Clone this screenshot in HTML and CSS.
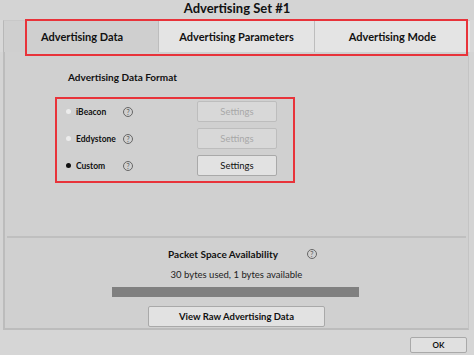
FILE: index.html
```html
<!DOCTYPE html>
<html lang="en">
<head>
    <meta charset="UTF-8">
    <title>Advertising Set #1</title>
    <link rel="stylesheet" href="styles.css">
</head>
<body>
    <div class="window">
        <div class="title">Advertising Set #1</div>
        <div class="tabs">
            <div class="tab active">Advertising Data</div>
            <div class="tab">Advertising Parameters</div>
            <div class="tab">Advertising Mode</div>
            <div class="mark mark-tabs"></div>
        </div>
        <div class="panel">
            <div class="section format">
                <div class="section-title">Advertising Data Format</div>
                <div class="options">
                    <div class="option">
                        <span class="radio"></span>
                        <span class="option-label">iBeacon</span>
                        <span class="help">?</span>
                        <button class="btn disabled">Settings</button>
                    </div>
                    <div class="option">
                        <span class="radio"></span>
                        <span class="option-label">Eddystone</span>
                        <span class="help">?</span>
                        <button class="btn disabled">Settings</button>
                    </div>
                    <div class="option">
                        <span class="radio checked"></span>
                        <span class="option-label">Custom</span>
                        <span class="help">?</span>
                        <button class="btn">Settings</button>
                    </div>
                </div>
            </div>
            <div class="section packet">
                <div class="packet-head">
                    <span class="packet-title">Packet Space Availability</span>
                    <span class="help">?</span>
                </div>
                <div class="packet-info">30 bytes used, 1 bytes available</div>
                <div class="bar"><div class="bar-fill" style="width: 100%"></div></div>
                <button class="btn btn-raw">View Raw Advertising Data</button>
            </div>
        </div>
        <div class="footer">
            <button class="btn btn-ok">OK</button>
        </div>
    </div>
</body>
</html>
```
FILE: styles.css
```css
body {
    margin: 0;
    padding: 0;
    font-family: Lato, 'Open Sans', sans-serif;
    color: #111;
    background: #d3d3d3;
}
.window {
    width: 474px;
    height: 355px;
    display: flex;
    flex-direction: column;
    overflow: hidden;
    background: #d4d4d4;
}
.title {
    height: 20px;
    line-height: 16px;
    text-align: center;
    font-size: 13px;
    font-weight: bold;
}
.tabs {
    position: relative;
    height: 32px;
    display: flex;
    padding-left: 3px;
    background: #d8d8d8;
}
.tab {
    display: flex;
    align-items: center;
    justify-content: center;
    font-size: 11px;
    font-weight: bold;
    background: #e4e4e4;
    border-left: 1px solid #bdbdbd;
    border-top: 1px solid #c8c8c8;
    box-sizing: border-box;
    width: 156px;
}
.tab.active {
    width: 155px;
    background: #cfcfcf;
    border-left: 1px solid #b8b8b8;
    justify-content: flex-start;
    padding-left: 37px;
}
.tab:last-of-type {
    width: 153px;
    border-right: 1px solid #c8c8c8;
}
.mark {
    position: absolute;
    border: 2px solid #e8333a;
    box-sizing: border-box;
    pointer-events: none;
}
.mark-tabs {
    left: 25px;
    top: -1px;
    width: 443px;
    height: 37px;
}
.panel {
    height: 278px;
    margin: 0 5px 0 3px;
    background: #d0d0d0;
    border-left: 2px solid #bcbcbc;
    border-right: 1px solid #c4c4c4;
    border-bottom: 2px solid #bcbcbc;
    box-sizing: border-box;
    display: flex;
    flex-direction: column;
}
.section {
    box-sizing: border-box;
}
.format {
    height: 186px;
    padding: 18px 0 0 48px;
    border-bottom: 2px solid #bfbfbf;
    margin: 0 2px;
}
.section-title {
    font-size: 10px;
    font-weight: bold;
    padding-left: 13px;
    height: 27px;
    line-height: 14px;
}
.options {
    width: 240px;
    height: 86px;
    border: 2px solid #e8333a;
    box-sizing: border-box;
    display: flex;
    flex-direction: column;
    gap: 6px;
    padding: 2px 0 0 9px;
}
.option {
    display: flex;
    align-items: center;
    height: 21px;
}
.radio {
    width: 5px;
    height: 5px;
    border-radius: 50%;
    background: #ececec;
    margin-right: 5px;
}
.radio.checked {
    background: #111;
}
.option-label {
    width: 47px;
    font-size: 8.5px;
    font-weight: bold;
}
.help {
    width: 8px;
    height: 8px;
    border: 1px solid #666;
    border-radius: 50%;
    font-size: 7px;
    line-height: 8px;
    text-align: center;
    color: #555;
}
.btn {
    font-family: Lato, 'Open Sans', sans-serif;
    font-size: 9.5px;
    color: #111;
    background: #e2e2e2;
    border: 1px solid #a9a9a9;
    border-radius: 2px;
    padding: 0;
    box-sizing: border-box;
}
.option .btn {
    width: 80px;
    height: 21px;
    margin-left: 64px;
}
.btn.disabled {
    color: #a8a8a8;
    background: #d8d8d8;
    border-color: #bdbdbd;
}
.packet {
    flex: 1;
    display: flex;
    flex-direction: column;
    align-items: center;
    padding-top: 8px;
}
.packet-head {
    display: flex;
    align-items: center;
    height: 16px;
    padding-left: 12px;
}
.packet-title {
    font-size: 10px;
    font-weight: bold;
    margin-right: 29px;
}
.packet-info {
    font-size: 9.5px;
    color: #222;
    margin-top: 4px;
    height: 16px;
    line-height: 17px;
}
.bar {
    width: 247px;
    height: 10px;
    background: #c0c0c0;
    margin-top: 5px;
    margin-left: -2px;
}
.bar-fill {
    height: 100%;
    background: #808080;
}
.btn-raw {
    width: 177px;
    height: 21px;
    margin-top: 9px;
    font-weight: bold;
    font-size: 9.5px;
}
.footer {
    flex: 1;
    display: flex;
    justify-content: flex-end;
    align-items: flex-start;
    padding: 7px 7px 0 0;
    background: #d6d6d6;
}
.btn-ok {
    width: 57px;
    height: 16px;
    font-size: 8px;
    font-weight: bold;
    background: #e0e0e0;
}
```
